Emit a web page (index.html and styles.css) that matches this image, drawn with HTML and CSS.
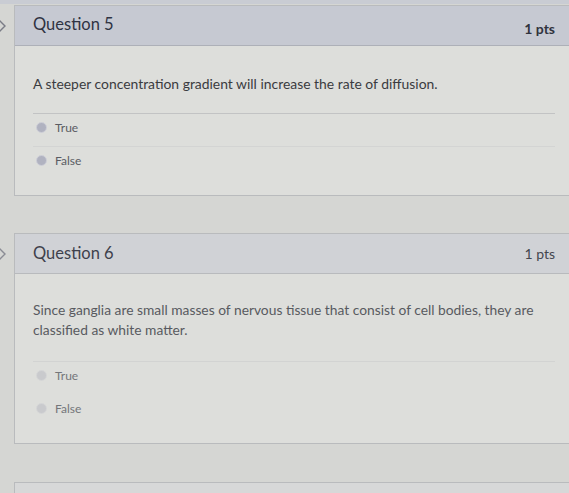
FILE: index.html
```html
<!DOCTYPE html>
<html>
<head>
    <title>Quiz</title>
    <link rel="stylesheet" href="styles.css">
</head>
<body>
    <div class="quiz">
        <!-- Question 5 -->
        <div class="question-row">
            <div class="gutter">
                <svg class="chevron" width="10" height="16" viewBox="0 0 10 16"><path d="M1 2 L7 8 L1 14" fill="none" stroke="#7a7c86" stroke-width="1.4"/></svg>
            </div>
            <div class="card first">
                <div class="card-header">
                    <span class="title">Question 5</span>
                    <span class="points">1 pts</span>
                </div>
                <div class="card-body">
                    <p class="question-text">A steeper concentration gradient will increase the rate of diffusion.</p>
                    <div class="answers">
                        <div class="answer"><span class="radio"></span>True</div>
                        <div class="answer"><span class="radio"></span>False</div>
                    </div>
                </div>
            </div>
        </div>

        <!-- Question 6 -->
        <div class="question-row">
            <div class="gutter">
                <svg class="chevron" width="10" height="16" viewBox="0 0 10 16"><path d="M1 2 L7 8 L1 14" fill="none" stroke="#8a8c94" stroke-width="1.4"/></svg>
            </div>
            <div class="card second">
                <div class="card-header">
                    <span class="title">Question 6</span>
                    <span class="points">1 pts</span>
                </div>
                <div class="card-body">
                    <p class="question-text">Since ganglia are small masses of nervous tissue that consist of cell bodies, they are classified as white matter.</p>
                    <div class="answers">
                        <div class="answer"><span class="radio"></span>True</div>
                        <div class="answer"><span class="radio"></span>False</div>
                    </div>
                </div>
            </div>
        </div>

        <!-- Next question (cut off) -->
        <div class="question-row">
            <div class="gutter"></div>
            <div class="card third">
                <div class="card-header"></div>
            </div>
        </div>
    </div>
</body>
</html>
```

FILE: styles.css
```css
body {
    font-family: Lato, "Open Sans", sans-serif;
    margin: 0;
    padding-top: 5px;
    background-color: #d5d6d3;
    border-top: 4px solid #c9ccd3;
    box-sizing: border-box;
    height: 100vh;
    overflow: hidden;
    color: #3b3d44;
}
.quiz {
    margin-top: -4px;
}
.question-row {
    display: flex;
    margin-bottom: 37px;
}
.question-row + .question-row {
    margin-bottom: 38px;
}
.gutter {
    width: 14px;
    flex-shrink: 0;
    padding-top: 13px;
    margin-left: -2px;
    margin-right: 2px;
}
.chevron {
    display: block;
}
/* Question card */
.card {
    flex: 1;
    border: 1px solid #b9bbbd;
    border-right: none;
    background-color: #dddedb;
}
.card-header {
    height: 39px;
    display: flex;
    justify-content: space-between;
    align-items: center;
    padding: 0 14px 0 18px;
    background-color: #c6c9d2;
    border-bottom: 1px solid #adb0b8;
}
.card.second .card-header {
    background-color: #d0d2d6;
    border-bottom-color: #b8babd;
}
.card.third .card-header {
    background-color: #d7d8d8;
}
.title {
    font-size: 16.5px;
    color: #2f3342;
    margin-bottom: 4px;
}
.card.second .title {
    color: #3e414c;
    margin-bottom: 2px;
}
.points {
    font-size: 14px;
    font-weight: bold;
    color: #30333d;
    margin-top: 6px;
}
.card.second .points {
    font-weight: normal;
    color: #44464e;
    margin-top: 0;
}
.card-body {
    padding: 28px 14px 16px 18px;
}
.question-text {
    margin: 0 0 19px 0;
    font-size: 13.9px;
    line-height: 20px;
    color: #3a3b40;
}
.card.second .question-text {
    color: #585a60;
    font-size: 13.8px;
    margin-bottom: 21px;
}
.card.second .card-body {
    padding-top: 26px;
}
.answers {
    border-top: 1px solid #c2c3c4;
}
.card.second .answers {
    border-top-color: #d2d3d2;
}
.answer {
    height: 32px;
    display: flex;
    align-items: center;
    padding-left: 4px;
    padding-bottom: 5px;
    box-sizing: border-box;
    font-size: 12px;
    color: #5a5c63;
}
.answer + .answer {
    border-top: 1px solid #d3d4d3;
    height: 33px;
}
.card.second .answer {
    color: #74767a;
}
.card.second .answer + .answer {
    border-top-color: #dddedb;
}
.radio {
    width: 9px;
    height: 9px;
    border-radius: 50%;
    background-color: #b0b2c0;
    border: 1px solid #cfd0d8;
    margin-right: 8px;
    margin-left: -1px;
}
.card.second .radio {
    background-color: #c9cacd;
    border-color: #d6d7d8;
}
```
